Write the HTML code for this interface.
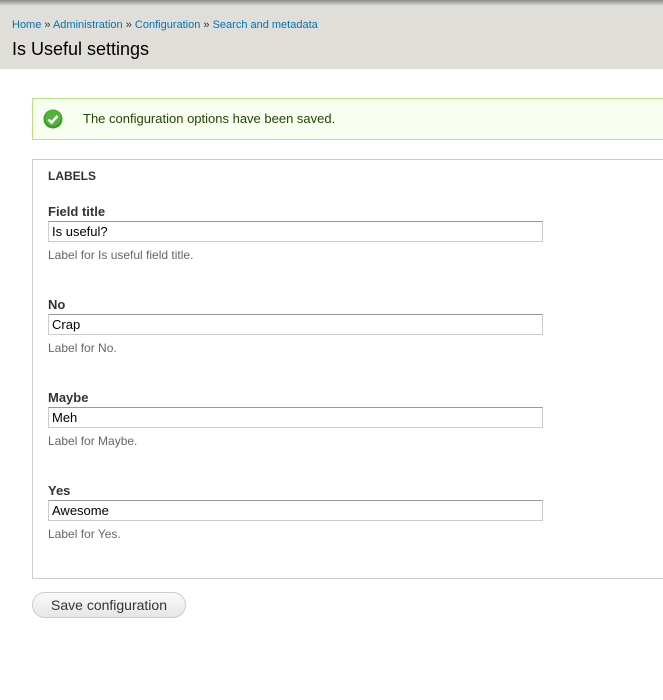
<!DOCTYPE html>
<html><head><style>
body{margin:0;width:663px;height:700px;overflow:hidden;background:#fff;font-family:"Liberation Sans",sans-serif;color:#333;}
.hd{position:absolute;left:0;top:0;width:663px;height:69px;background:#e0ded8;}
.hd:before{content:"";position:absolute;left:0;top:0;right:0;height:6px;background:linear-gradient(#8a8a88,#e0ded8);}
.bc{position:absolute;left:12px;top:18px;font-size:11px;line-height:14px;color:#333;}
.bc a{color:#0074bd;text-decoration:none;}
h1{position:absolute;left:12px;top:39px;margin:0;font-size:18px;line-height:21px;font-weight:normal;color:#000;}
.msg{position:absolute;left:32px;top:98px;width:640px;height:40px;border:1px solid #b8e480;background:#f8fff0;}
.msg span{position:absolute;left:50px;top:12px;font-size:13px;color:#234600;}
.msg svg{position:absolute;left:10px;top:10px;}
.fs{position:absolute;left:32px;top:159px;width:640px;height:418px;border:1px solid #ccc;}
.lg{position:absolute;left:15px;top:9px;font-size:12px;font-weight:bold;}
.it{position:absolute;left:15px;}
.it b{display:block;font-size:13px;height:15px;line-height:15px;}
.it .in{width:490px;height:19px;border:1px solid #ccc;border-top-color:#999;margin-top:2px;font-size:13px;line-height:19px;padding-left:3px;color:#000;}
.it .d{font-size:12px;color:#666;margin-top:6px;line-height:14px;}
.btn{position:absolute;left:32px;top:592px;width:152px;height:24px;border:1px solid #ccc;border-radius:13px;background:linear-gradient(#fafafa,#e6e6e6);font-size:14px;color:#333;text-align:center;line-height:24px;}
</style></head><body>
<div class="hd"><div class="bc"><a>Home</a> » <a>Administration</a> » <a>Configuration</a> » <a>Search and metadata</a></div>
<h1>Is Useful settings</h1></div>
<div class="msg"><svg width="20" height="20" viewBox="0 0 20 20"><circle cx="10" cy="10" r="9.5" fill="#3a9a2a"/><circle cx="10" cy="9" r="8" fill="#52b43a"/><path d="M5.5 10.5l3 3 6-6.5" stroke="#fff" stroke-width="2.6" fill="none"/></svg><span>The configuration options have been saved.</span></div>
<div class="fs"><div class="lg">LABELS</div>
<div class="it" style="top:44px"><b>Field title</b><div class="in">Is useful?</div><div class="d">Label for Is useful field title.</div></div>
<div class="it" style="top:137px"><b>No</b><div class="in">Crap</div><div class="d">Label for No.</div></div>
<div class="it" style="top:230px"><b>Maybe</b><div class="in">Meh</div><div class="d">Label for Maybe.</div></div>
<div class="it" style="top:323px"><b>Yes</b><div class="in">Awesome</div><div class="d">Label for Yes.</div></div>
</div>
<div class="btn">Save configuration</div>
</body></html>
